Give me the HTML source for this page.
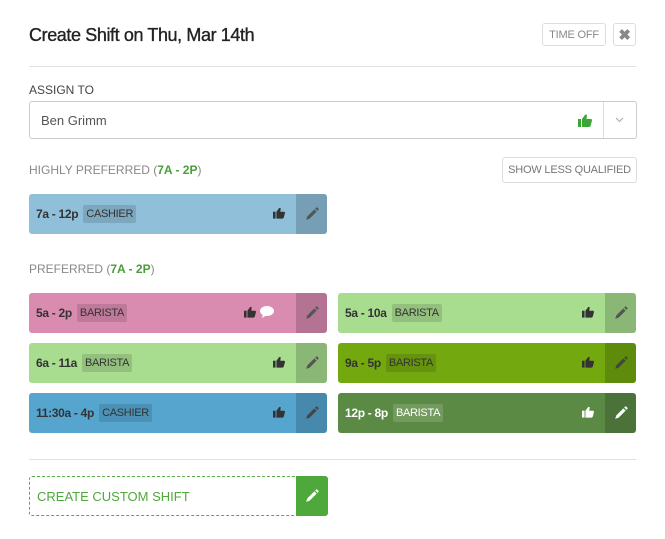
<!DOCTYPE html>
<html><head><style>
*{box-sizing:border-box;margin:0;padding:0}
body{width:665px;height:539px;background:#fff;font-family:"Liberation Sans",sans-serif;color:#333;position:relative;overflow:hidden}
.abs{position:absolute}
.title{left:29px;top:25px;font-size:18px;color:#222;letter-spacing:-0.4px;-webkit-text-stroke:0.35px #222}
.btn{border:1px solid #ddd;border-radius:3px;color:#888;font-size:11px;display:flex;align-items:center;justify-content:center;background:#fff;letter-spacing:-0.2px}
.hr{left:29px;width:607px;height:1px;background:#e0e0e0}
.lbl{font-size:12px;color:#444;left:29px}
.lbl2{font-size:12px;color:#888;left:29px}
.g{color:#4a9d3a;font-weight:bold}
.card{position:absolute;width:298px;height:40px;border-radius:3px;overflow:hidden;display:flex;align-items:center;font-size:12px}
.card .t{margin-left:7px;color:#333;font-weight:bold;font-size:12px;letter-spacing:-0.3px}
.card .tag{margin-left:5px;padding:3px 3px;background:rgba(0,0,0,0.12);border-radius:2px;font-size:11px;color:#333;letter-spacing:-0.3px}
.card .ed{position:absolute;right:0;top:0;width:31px;height:40px;background:rgba(0,0,0,0.17);display:flex;align-items:center;justify-content:center}
.card .th{position:absolute;right:42px;top:13px}
</style></head><body>
<div class="abs title">Create Shift on Thu, Mar 14th</div>
<div class="abs btn" style="left:542px;top:23px;width:64px;height:23px">TIME OFF</div>
<div class="abs btn" style="left:613px;top:23px;width:23px;height:23px;font-size:15px;color:#888;font-weight:bold">✖</div>
<div class="abs hr" style="top:66px"></div>
<div class="abs lbl" style="top:83px">ASSIGN TO</div>
<div class="abs" style="left:29px;top:101px;width:608px;height:38px;border:1px solid #ccc;border-radius:3px">
 <div class="abs" style="left:11px;top:11px;font-size:13px;color:#555">Ben Grimm</div>
 <svg class="abs" style="left:548px;top:12px" width="14" height="13" viewBox="0 0 14 13"><rect x="0" y="5" width="3" height="8" fill="#3aa635"/><path d="M4 5 L7 1 Q8 0 9 1 L8.5 5 L13 5 Q14 5 14 6.5 L12.5 12 Q12 13 11 13 L4 13Z" fill="#3aa635"/></svg>
 <div class="abs" style="left:573px;top:0;width:1px;height:36px;background:#ddd"></div>
 <svg class="abs" style="left:585px;top:15px" width="9" height="6" viewBox="0 0 9 6"><path d="M1 1 L4.5 4.5 L8 1" stroke="#aaa" fill="none"/></svg>
</div>
<div class="abs lbl2" style="top:163px">HIGHLY PREFERRED (<span class="g">7A - 2P</span>)</div>
<div class="abs btn" style="left:502px;top:157px;width:135px;height:26px;color:#777">SHOW LESS QUALIFIED</div>

<div class="card" style="left:29px;top:194px;background:#8fbfd9"><span class="t">7a - 12p</span><span class="tag">CASHIER</span><svg class="th" width="12" height="12" viewBox="0 0 14 13"><rect x="0" y="5" width="3" height="8" fill="#333"/><path d="M4 5 L7 1 Q8 0 9 1 L8.5 5 L13 5 Q14 5 14 6.5 L12.5 12 Q12 13 11 13 L4 13Z" fill="#333"/></svg><div class="ed"><svg width="14" height="14" viewBox="0 0 12 12"><path d="M2 8 L8 2 L10 4 L4 10 L1 11Z M8.7 1.3 L9.5 0.5 Q10 0 10.5 0.5 L11.5 1.5 Q12 2 11.5 2.5 L10.7 3.3Z" fill="#555"/></svg></div></div>

<div class="abs lbl2" style="top:262px">PREFERRED (<span class="g">7A - 2P</span>)</div>

<div class="card" style="left:29px;top:293px;background:#d98bb0"><span class="t">5a - 2p</span><span class="tag">BARISTA</span><svg class="th" style="right:71px" width="12" height="12" viewBox="0 0 14 13"><rect x="0" y="5" width="3" height="8" fill="#333"/><path d="M4 5 L7 1 Q8 0 9 1 L8.5 5 L13 5 Q14 5 14 6.5 L12.5 12 Q12 13 11 13 L4 13Z" fill="#333"/></svg><svg class="abs" style="right:53px;top:13px" width="14" height="12" viewBox="0 0 14 12"><ellipse cx="7" cy="5" rx="7" ry="5" fill="#fff"/><path d="M3 8 L2 12 L7 9Z" fill="#fff"/></svg><div class="ed"><svg width="14" height="14" viewBox="0 0 12 12"><path d="M2 8 L8 2 L10 4 L4 10 L1 11Z M8.7 1.3 L9.5 0.5 Q10 0 10.5 0.5 L11.5 1.5 Q12 2 11.5 2.5 L10.7 3.3Z" fill="#555"/></svg></div></div>

<div class="card" style="left:338px;top:293px;background:#a8dc8f"><span class="t">5a - 10a</span><span class="tag">BARISTA</span><svg class="th" width="12" height="12" viewBox="0 0 14 13"><rect x="0" y="5" width="3" height="8" fill="#333"/><path d="M4 5 L7 1 Q8 0 9 1 L8.5 5 L13 5 Q14 5 14 6.5 L12.5 12 Q12 13 11 13 L4 13Z" fill="#333"/></svg><div class="ed"><svg width="14" height="14" viewBox="0 0 12 12"><path d="M2 8 L8 2 L10 4 L4 10 L1 11Z M8.7 1.3 L9.5 0.5 Q10 0 10.5 0.5 L11.5 1.5 Q12 2 11.5 2.5 L10.7 3.3Z" fill="#555"/></svg></div></div>

<div class="card" style="left:29px;top:343px;background:#a8dc8f"><span class="t">6a - 11a</span><span class="tag">BARISTA</span><svg class="th" width="12" height="12" viewBox="0 0 14 13"><rect x="0" y="5" width="3" height="8" fill="#333"/><path d="M4 5 L7 1 Q8 0 9 1 L8.5 5 L13 5 Q14 5 14 6.5 L12.5 12 Q12 13 11 13 L4 13Z" fill="#333"/></svg><div class="ed"><svg width="14" height="14" viewBox="0 0 12 12"><path d="M2 8 L8 2 L10 4 L4 10 L1 11Z M8.7 1.3 L9.5 0.5 Q10 0 10.5 0.5 L11.5 1.5 Q12 2 11.5 2.5 L10.7 3.3Z" fill="#555"/></svg></div></div>

<div class="card" style="left:338px;top:343px;background:#73a80f"><span class="t">9a - 5p</span><span class="tag">BARISTA</span><svg class="th" width="12" height="12" viewBox="0 0 14 13"><rect x="0" y="5" width="3" height="8" fill="#333"/><path d="M4 5 L7 1 Q8 0 9 1 L8.5 5 L13 5 Q14 5 14 6.5 L12.5 12 Q12 13 11 13 L4 13Z" fill="#333"/></svg><div class="ed"><svg width="14" height="14" viewBox="0 0 12 12"><path d="M2 8 L8 2 L10 4 L4 10 L1 11Z M8.7 1.3 L9.5 0.5 Q10 0 10.5 0.5 L11.5 1.5 Q12 2 11.5 2.5 L10.7 3.3Z" fill="#444"/></svg></div></div>

<div class="card" style="left:29px;top:393px;background:#55a5cf"><span class="t">11:30a - 4p</span><span class="tag">CASHIER</span><svg class="th" width="12" height="12" viewBox="0 0 14 13"><rect x="0" y="5" width="3" height="8" fill="#333"/><path d="M4 5 L7 1 Q8 0 9 1 L8.5 5 L13 5 Q14 5 14 6.5 L12.5 12 Q12 13 11 13 L4 13Z" fill="#333"/></svg><div class="ed"><svg width="14" height="14" viewBox="0 0 12 12"><path d="M2 8 L8 2 L10 4 L4 10 L1 11Z M8.7 1.3 L9.5 0.5 Q10 0 10.5 0.5 L11.5 1.5 Q12 2 11.5 2.5 L10.7 3.3Z" fill="#444"/></svg></div></div>

<div class="card" style="left:338px;top:393px;background:#5b8a45"><span class="t" style="color:#fff">12p - 8p</span><span class="tag" style="color:#fff;background:rgba(255,255,255,0.15)">BARISTA</span><svg class="th" width="12" height="12" viewBox="0 0 14 13"><rect x="0" y="5" width="3" height="8" fill="#fff"/><path d="M4 5 L7 1 Q8 0 9 1 L8.5 5 L13 5 Q14 5 14 6.5 L12.5 12 Q12 13 11 13 L4 13Z" fill="#fff"/></svg><div class="ed"><svg width="14" height="14" viewBox="0 0 12 12"><path d="M2 8 L8 2 L10 4 L4 10 L1 11Z M8.7 1.3 L9.5 0.5 Q10 0 10.5 0.5 L11.5 1.5 Q12 2 11.5 2.5 L10.7 3.3Z" fill="#fff"/></svg></div></div>

<div class="abs hr" style="top:459px"></div>
<div class="abs" style="left:29px;top:476px;width:298px;height:40px;border:1px dashed #5aaa45;border-radius:3px;display:flex;align-items:center;font-size:13px;color:#4fa83c;padding-left:7px">CREATE CUSTOM SHIFT</div>
<div class="abs" style="left:296px;top:476px;width:32px;height:40px;background:#4fa83c;border-radius:0 3px 3px 0;display:flex;align-items:center;justify-content:center"><svg width="14" height="14" viewBox="0 0 12 12"><path d="M2 8 L8 2 L10 4 L4 10 L1 11Z M8.7 1.3 L9.5 0.5 Q10 0 10.5 0.5 L11.5 1.5 Q12 2 11.5 2.5 L10.7 3.3Z" fill="#fff"/></svg></div>
</body></html>
